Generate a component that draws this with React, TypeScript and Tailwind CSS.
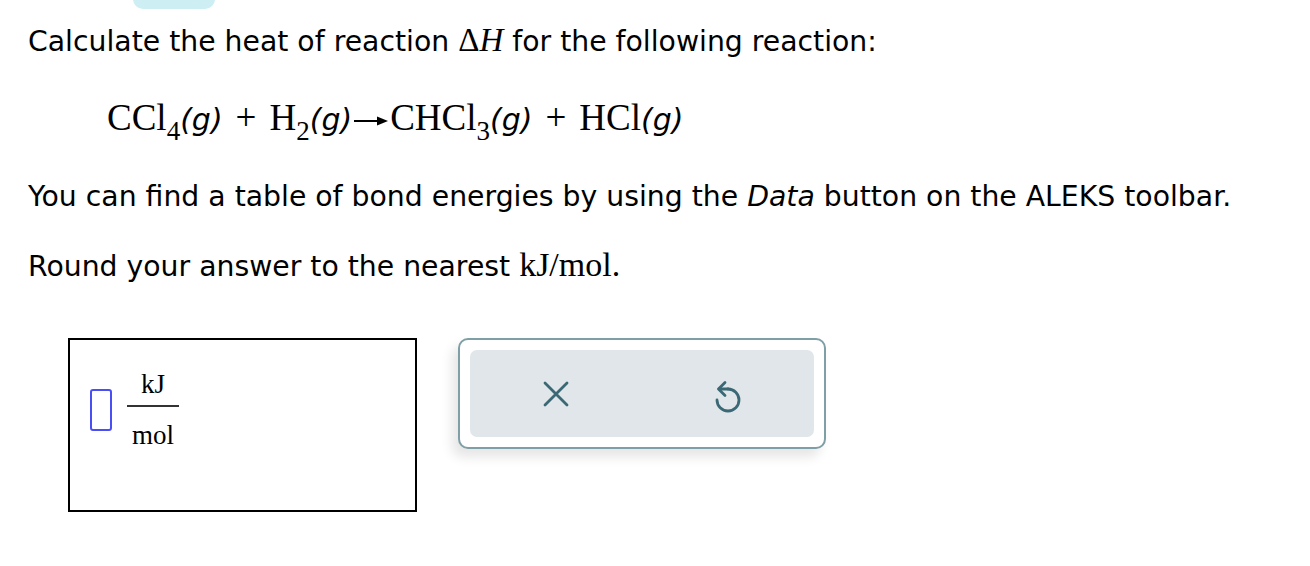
import React from 'react';

const sans = "font-['DejaVu_Sans',Verdana,sans-serif]";
const serif = "font-['Liberation_Serif','Times_New_Roman',serif]";

const G: React.FC = () => <span className={`${sans} italic text-[30px]`}>(g)</span>;

const Sub: React.FC<{ n: string }> = ({ n }) => (
  <sub className="text-[27px] relative top-[10px] align-baseline">{n}</sub>
);

const App: React.FC = () => {
  return (
    <div className={`w-[1310px] h-[566px] bg-white text-black ${sans} relative overflow-hidden`}>
      {/* clipped tab from the toolbar above */}
      <div className="absolute left-[133px] -top-[20px] w-[82px] h-[29px] rounded-[10px] bg-[#cdeef3]" />

      <div className="flex flex-col pl-[28px] pt-[22px]">
        <p className="text-[28.3px] leading-[36px]">
          Calculate the heat of reaction{' '}
          <span className={`${serif} text-[33px]`}>Δ<i>H</i></span> for the following reaction:
        </p>

        <div className={`${serif} text-[37px] leading-[44px] pl-[79px] mt-[36px] flex items-baseline whitespace-pre`}>
          <span>CCl<Sub n="4" /></span>
          <G />
          <span className="mx-[13px]">+</span>
          <span>H<Sub n="2" /></span>
          <G />
          <svg className="w-[36px] h-[12px] mx-[1px] self-center mt-[4px]" viewBox="0 0 36 12">
            <path d="M1 6 H28" stroke="black" strokeWidth="2" />
            <path d="M24 1.5 L35 6 L24 10.5 Z" fill="black" />
          </svg>
          <span>CHCl<Sub n="3" /></span>
          <G />
          <span className="mx-[13px]">+</span>
          <span>HCl</span>
          <G />
        </div>

        <p className="text-[28.3px] leading-[36px] mt-[37px]">
          You can find a table of bond energies by using the <i>Data</i> button on the ALEKS toolbar.
        </p>

        <p className="text-[28.3px] leading-[36px] mt-[32px]">
          Round your answer to the nearest <span className={`${serif} text-[34px]`}>kJ/mol.</span>
        </p>

        <div className="flex items-start gap-[41px] mt-[53px] ml-[40px]">
          {/* answer box */}
          <div className="w-[349px] h-[174px] border-2 border-black flex items-start pl-[20px] pt-[29px]">
            <div className="w-[22px] h-[42px] border-[2.5px] border-[#4a4ef5] rounded-[3px] mt-[20px]" />
            <div className={`${serif} text-[27px] leading-[30px] flex flex-col items-center ml-[15px]`}>
              <span className="pb-[6px]">kJ</span>
              <div className="w-[52px] h-[2px] bg-[#333]" />
              <span className="pt-[13px]">mol</span>
            </div>
          </div>

          {/* action panel */}
          <div className="w-[368px] h-[111px] border-2 border-[#7f9fa7] rounded-[10px] bg-white p-[10px] shadow-[-6px_8px_12px_rgba(0,0,0,0.10)]">
            <div className="w-full h-full bg-[#e0e6e9] rounded-[7px] flex items-center">
              <button className="flex-1 flex justify-center text-[#3a6875]">
                <svg width="26" height="26" viewBox="0 0 26 26" fill="none" stroke="currentColor" strokeWidth="2.8" strokeLinecap="round">
                  <path d="M2 2 L24 24 M24 2 L2 24" />
                </svg>
              </button>
              <button className="flex-1 flex justify-center text-[#3a6875] pt-[4px]">
                <svg width="30" height="34" viewBox="0 0 30 34" fill="none" stroke="currentColor" strokeWidth="2.8" strokeLinecap="round" strokeLinejoin="round">
                  <path d="M15 10 A11 11 0 1 1 4 21" />
                  <path d="M15 10 H6" />
                  <path d="M12 3.5 L5.5 10 L12 16.5" />
                </svg>
              </button>
            </div>
          </div>
        </div>
      </div>
    </div>
  );
};

export default App;
